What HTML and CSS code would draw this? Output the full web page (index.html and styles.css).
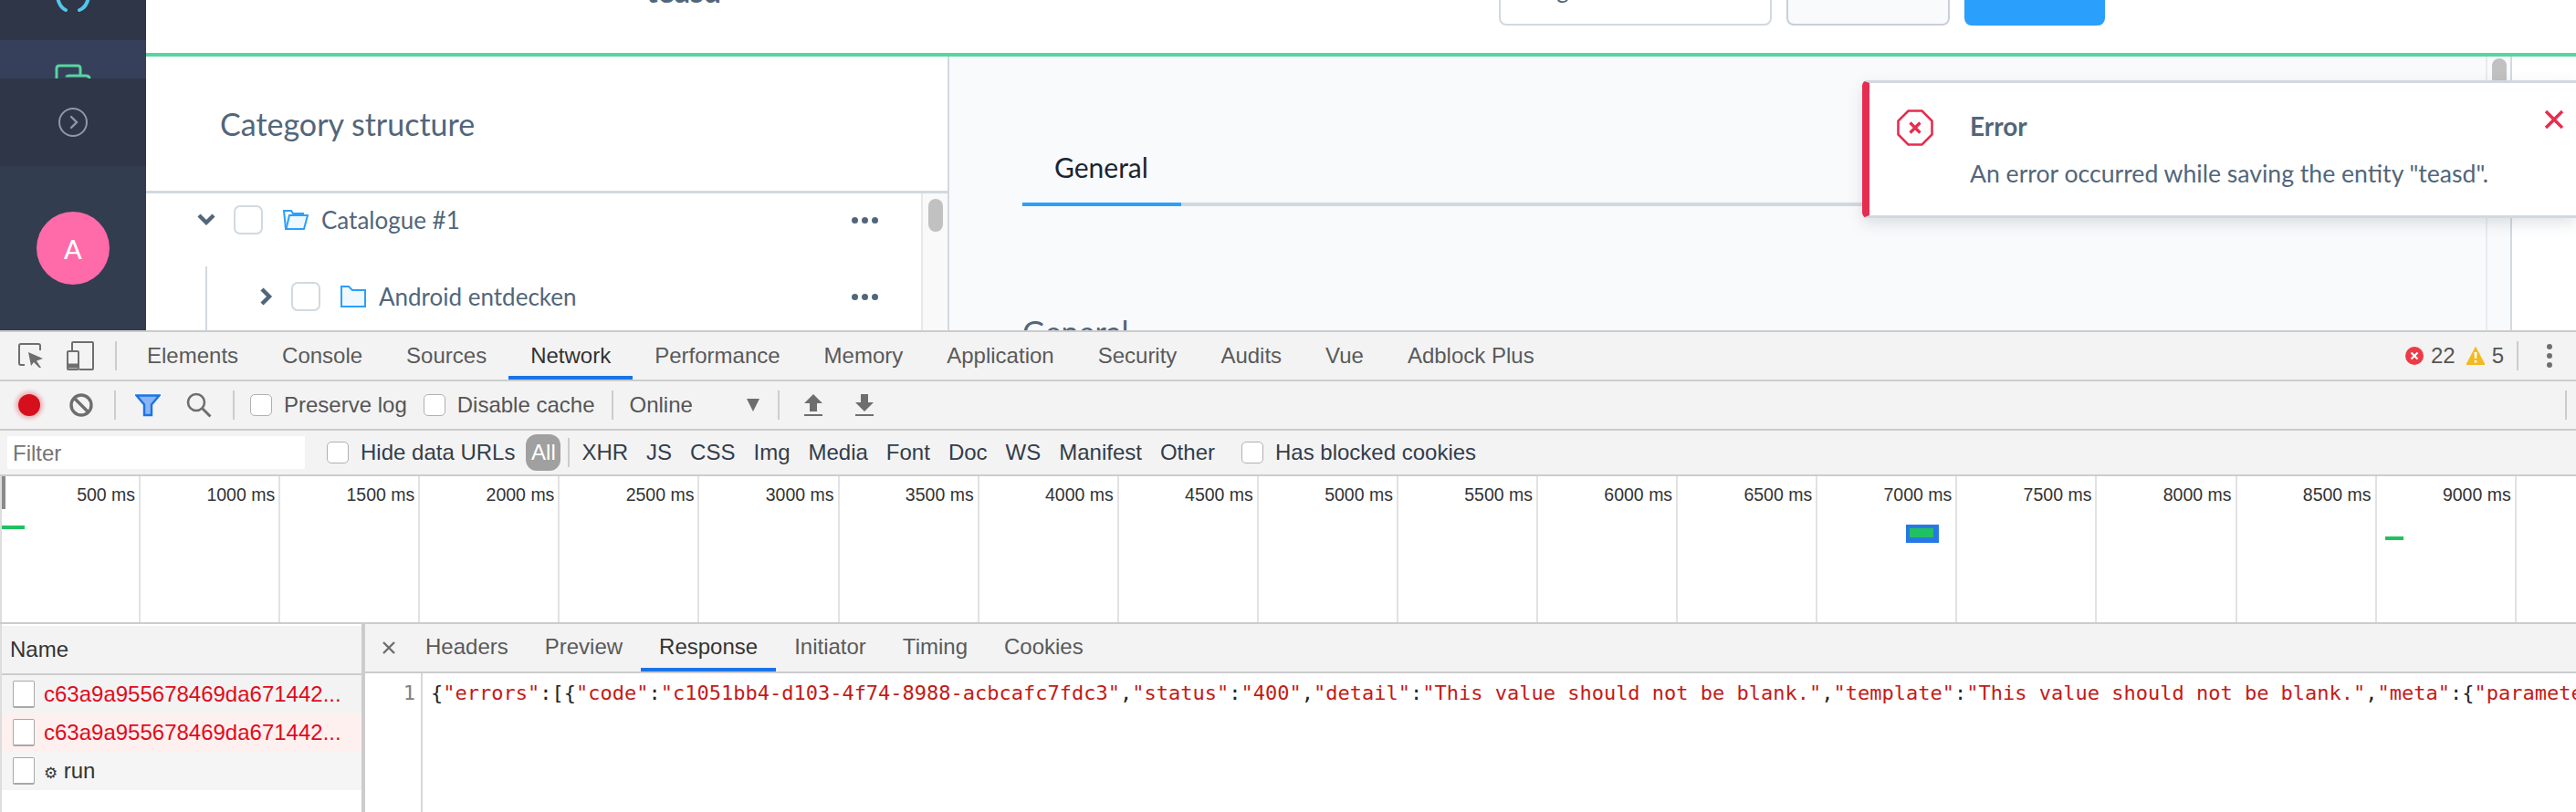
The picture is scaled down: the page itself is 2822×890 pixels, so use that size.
FILE: index.html
```html
<!DOCTYPE html>
<html lang="en">
<head>
  <meta charset="UTF-8" />
  <title>Category structure</title>
  <link rel="stylesheet" href="styles.css">
</head>
<body>
  <div class="app">
    <div class="sidebar">
      <div class="nav-item nav-cut">
        <svg width="40" height="16" viewBox="0 0 40 16" fill="none" stroke="#55c6ea" stroke-width="4" stroke-linecap="round"><path d="M3 -8C2 0 5 10 12 13"/><path d="M37 -8C38 0 35 10 27 13"/></svg>
      </div>
      <div class="nav-item nav-active">
        <svg width="40" height="16" viewBox="0 0 40 16" fill="none" stroke="#57d69f" stroke-width="3"><path d="M2 16V5Q2 2 5 2H25Q28 2 28 5V14"/><path d="M13 14.500Q13 13 16 13H34Q38 13 38 16"/></svg>
      </div>
      <div class="nav-toggle">
        <svg width="32" height="32" viewBox="0 0 32 32" fill="none" stroke="#8e9aa8" stroke-width="2"><circle cx="16" cy="16" r="15"/><path d="M14 10l6 6-6 6" stroke-width="2.400" stroke-linecap="round"/></svg>
      </div>
      <div class="nav-user"><span class="avatar">A</span></div>
    </div>
    <div class="workspace">
      <div class="topbar">
        <div class="entity-name">teasd</div>
        <div class="top-actions">
          <div class="btn btn-select">English</div>
          <div class="btn btn-plain"></div>
          <div class="btn btn-save"></div>
        </div>
      </div>
      <div class="panes">
        <div class="tree-pane">
          <h2 class="pane-title">Category structure</h2>
          <div class="tree-wrap">
            <div class="tree">
              <div class="tree-row">
                <svg class="chev" width="20" height="14" viewBox="0 0 20 14" fill="none" stroke="#52667a" stroke-width="4.400"><path d="M2 2l8 8 8-8"/></svg>
                <span class="box"></span>
                <svg class="folder" width="28" height="24" viewBox="0 0 28 24" fill="#eff8ff" stroke="#2b9ffc" stroke-width="2"><path d="M7 22H3L1 2H9L11 5H22V7"/><path d="M7 7H27L23 22H3.500Z"/></svg>
                <span class="tree-label">Catalogue #1</span>
                <span class="dots"><i></i><i></i><i></i></span>
              </div>
              <div class="tree-sub">
                <div class="tree-row">
                  <svg class="chev" width="14" height="20" viewBox="0 0 14 20" fill="none" stroke="#52667a" stroke-width="4.400"><path d="M2 2l8 8-8 8"/></svg>
                  <span class="box"></span>
                  <svg class="folder" width="28" height="24" viewBox="0 0 28 24" fill="#eff8ff" stroke="#2b9ffc" stroke-width="2"><path d="M1 1H9L13 5H27V23H1Z"/></svg>
                  <span class="tree-label">Android entdecken</span>
                  <span class="dots"><i></i><i></i><i></i></span>
                </div>
              </div>
            </div>
            <div class="scroll-track"><span class="scroll-thumb"></span></div>
          </div>
        </div>
        <div class="detail-pane">
          <div class="detail-tabs"><span class="detail-tab">General</span></div>
          <h2 class="detail-heading">General</h2>
        </div>
        <div class="main-scroll"><span class="main-thumb"></span></div>
        <div class="right-blank"></div>
      </div>
    </div>
    <div class="toast">
      <svg class="toast-icon" width="40" height="40" viewBox="0 0 40 40" fill="none" stroke="#e52d50" stroke-width="2.600"><path d="M12.500 1.500H27.500L38.500 12.500V27.500L27.500 38.500H12.500L1.500 27.500V12.500Z"/><path d="M14.500 14.500l11 11M25.500 14.500l-11 11" stroke-width="3.200"/></svg>
      <div class="toast-body">
        <div class="toast-title">Error</div>
        <div class="toast-msg">An error occurred while saving the entity "teasd".</div>
      </div>
      <svg class="toast-close" width="22" height="22" viewBox="0 0 22 22" fill="none" stroke="#e52d50" stroke-width="3.400"><path d="M2 2l18 18M20 2L2 20"/></svg>
    </div>
  </div>

  <div class="devtools">
    <div class="dt-bar dt-tabs">
      <svg class="ic-inspect" width="28" height="28" viewBox="0 0 28 28" fill="none" stroke="#6e6e6e" stroke-width="2"><path d="M7 24H3Q1 24 1 22V3Q1 1 3 1H22Q24 1 24 3V8"/><path d="M11 10L27 17L20 19.500L25 27L23 27L17 21L14 25Z" fill="#6e6e6e" stroke="none"/></svg>
      <svg class="ic-device" width="30" height="32" viewBox="0 0 30 32" fill="none" stroke="#6e6e6e" stroke-width="2"><path d="M6 10V2Q6 1 7 1H28Q29 1 29 2V30Q29 31 28 31H14"/><rect x="1" y="11" width="12" height="20" rx="1"/><path d="M1 27H13" stroke-width="5"/></svg>
      <span class="dt-sep sep-tabs"></span>
      <div class="tab-list">
        <span class="tab">Elements</span>
        <span class="tab">Console</span>
        <span class="tab">Sources</span>
        <span class="tab tab-on">Network</span>
        <span class="tab">Performance</span>
        <span class="tab">Memory</span>
        <span class="tab">Application</span>
        <span class="tab">Security</span>
        <span class="tab">Audits</span>
        <span class="tab">Vue</span>
        <span class="tab">Adblock Plus</span>
      </div>
      <div class="dt-counts">
        <svg width="20" height="20" viewBox="0 0 20 20"><circle cx="10" cy="10" r="10" fill="#ee3a46"/><path d="M6.500 6.500l7 7M13.500 6.500l-7 7" stroke="#fff" stroke-width="2.200"/></svg>
        <span class="count">22</span>
        <svg width="20" height="20" viewBox="0 0 20 20"><path d="M10 0.500L20 19.500H0Z" fill="#f3b922" stroke="#f3b922" stroke-linejoin="round"/><path d="M8.500 6H11.500L11 13H9Z M8.700 15H11.300V17.500H8.700Z" fill="#fff"/></svg>
        <span class="count">5</span>
        <span class="dt-sep sep-counts"></span>
        <span class="kebab"><i></i><i></i><i></i></span>
      </div>
    </div>

    <div class="dt-bar dt-tools">
      <span class="rec"></span>
      <svg class="ic-clear" width="26" height="26" viewBox="0 0 26 26" fill="none" stroke="#6e6e6e" stroke-width="3.400"><circle cx="13" cy="13" r="11"/><path d="M5.500 5.500l15 15"/></svg>
      <span class="dt-sep sep-a"></span>
      <svg class="ic-filter" width="28" height="25" viewBox="0 0 28 25" fill="#8bb4f2" stroke="#1a73e8" stroke-width="2.400"><path d="M1.500 1.500H26.500L18 11.500V23H10V11.500Z"/></svg>
      <svg class="ic-search" width="28" height="28" viewBox="0 0 28 28" fill="none" stroke="#6e6e6e" stroke-width="2.600"><circle cx="11" cy="11" r="9"/><path d="M17.500 17.500L26.500 26.500" stroke-width="3"/></svg>
      <span class="dt-sep sep-b"></span>
      <span class="check check-preserve"></span><span class="dt-label">Preserve log</span>
      <span class="check check-cache"></span><span class="dt-label">Disable cache</span>
      <span class="dt-sep sep-c"></span>
      <span class="dt-label lbl-online">Online</span>
      <span class="tri"></span>
      <span class="dt-sep sep-d"></span>
      <svg class="ic-up" width="20" height="24" viewBox="0 0 20 24" fill="#6e6e6e"><path d="M10 0L20 10H14V19H6V10H0Z"/><rect y="22" width="20" height="2"/></svg>
      <svg class="ic-down" width="20" height="24" viewBox="0 0 20 24" fill="#6e6e6e"><path d="M6 0H14V9H20L10 19L0 9H6Z"/><rect y="22" width="20" height="2"/></svg>
      <span class="dt-sep sep-e"></span>
    </div>

    <div class="dt-bar dt-filter">
      <div class="filter-box">Filter</div>
      <span class="check check-hide"></span><span class="ft ft-hide">Hide data URLs</span>
      <span class="pill">All</span>
      <span class="dt-sep sep-f"></span>
      <div class="ft-list">
        <span class="ft">XHR</span>
        <span class="ft">JS</span>
        <span class="ft">CSS</span>
        <span class="ft">Img</span>
        <span class="ft">Media</span>
        <span class="ft">Font</span>
        <span class="ft">Doc</span>
        <span class="ft">WS</span>
        <span class="ft">Manifest</span>
        <span class="ft">Other</span>
      </div>
      <span class="check check-blocked"></span><span class="ft">Has blocked cookies</span>
    </div>

    <div class="overview">
      <span class="ov-grip"></span>
      <div class="tick">500 ms</div>
      <div class="tick">1000 ms</div>
      <div class="tick">1500 ms</div>
      <div class="tick">2000 ms</div>
      <div class="tick">2500 ms</div>
      <div class="tick">3000 ms</div>
      <div class="tick">3500 ms</div>
      <div class="tick">4000 ms</div>
      <div class="tick">4500 ms</div>
      <div class="tick">5000 ms</div>
      <div class="tick">5500 ms</div>
      <div class="tick">6000 ms</div>
      <div class="tick">6500 ms</div>
      <div class="tick">7000 ms</div>
      <div class="tick">7500 ms</div>
      <div class="tick">8000 ms</div>
      <div class="tick">8500 ms</div>
      <div class="tick">9000 ms</div>
      <span class="ov-bar ov-first"></span>
      <span class="ov-bar ov-req"><i></i></span>
      <span class="ov-bar ov-last"></span>
    </div>

    <div class="net-split">
      <div class="names">
        <div class="names-head">Name</div>
        <div class="name-row"><span class="file"></span><span class="name-err">c63a9a955678469da671442...</span></div>
        <div class="name-row name-sel"><span class="file"></span><span class="name-err">c63a9a955678469da671442...</span></div>
        <div class="name-row name-alt"><span class="file"></span><span><span class="gear">⚙</span> run</span></div>
      </div>
      <div class="resp">
        <div class="resp-head">
          <svg class="resp-close" width="14" height="14" viewBox="0 0 14 14" stroke="#6e6e6e" stroke-width="2.400"><path d="M1 1l12 12M13 1L1 13"/></svg>
          <span class="rtab">Headers</span>
          <span class="rtab">Preview</span>
          <span class="rtab rtab-on">Response</span>
          <span class="rtab">Initiator</span>
          <span class="rtab">Timing</span>
          <span class="rtab">Cookies</span>
        </div>
        <div class="code">
          <div class="gutter">1</div>
          <div class="code-line">{<b>"errors"</b>:[{<b>"code"</b>:<b>"c1051bb4-d103-4f74-8988-acbcafc7fdc3"</b>,<b>"status"</b>:<b>"400"</b>,<b>"detail"</b>:<b>"This value should not be blank."</b>,<b>"template"</b>:<b>"This value should not be blank."</b>,<b>"meta"</b>:{<b>"parameters"</b>:{<b>"{{ value }}"</b>:<b>"null"</b>}}}]}</div>
        </div>
      </div>
    </div>
  </div>
</body>
</html>
```

FILE: styles.css
```css
* { box-sizing: border-box; }
html, body { margin: 0; padding: 0; height: 890px; overflow: hidden; background: #fff; }
body { font-family: "Liberation Sans", Arial, sans-serif; }
i { display: block; }

/* app */
.app { position: relative; display: flex; height: 362px; overflow: hidden; font-family: Lato, "Noto Sans", sans-serif; color: #52667a; }
.sidebar { width: 160px; flex: none; display: flex; flex-direction: column; background: #323d50; }
.nav-item { display: flex; justify-content: center; align-items: flex-end; overflow: hidden; background: #2e3648; }
.nav-cut { height: 44px; padding-bottom: 30px; }
.nav-active { height: 42px; background: #36405a; }
.nav-toggle { height: 96px; background: #2e3648; display: flex; justify-content: center; align-items: center; }
.nav-user { height: 180px; padding-top: 50px; display: flex; justify-content: center; align-items: flex-start; }
.avatar { width: 80px; height: 80px; border-radius: 50%; background: #ff6aa9; color: #fff; font-size: 29px; font-weight: 500; display: flex; align-items: center; justify-content: center; }

.workspace { flex: 1; min-width: 0; display: flex; flex-direction: column; }
.topbar { height: 62px; flex: none; border-bottom: 4px solid #57d69f; display: flex; justify-content: space-between; align-items: flex-end; overflow: hidden; padding: 0 516px 30px 548px; }
.entity-name { font-size: 34px; font-weight: 700; line-height: 40px; height: 40px; margin-bottom: 18px; color: #52667a; }
.top-actions { display: flex; gap: 16px; align-items: flex-end; height: 80px; }
.btn { height: 80px; border-radius: 8px; }
.btn-select { width: 299px; background: #fff; border: 2px solid #d1d9e0; font-size: 26px; color: #52667a; padding: 23px 0 0 32px; line-height: 30px; overflow: hidden; }
.btn-plain { width: 179px; background: #f9fafb; border: 2px solid #c8d0da; }
.btn-save { width: 154px; background: #2b9ffc; }

.panes { flex: 1; min-height: 0; display: flex; }
.tree-pane { width: 880px; flex: none; background: #fff; border-right: 2px solid #d1d9e0; display: flex; flex-direction: column; }
.pane-title { margin: 0; height: 150px; flex: none; padding: 0 0 0 81px; border-bottom: 3px solid #d1d9e0; font-size: 34px; font-weight: 400; line-height: 148px; color: #52667a; }
.tree-wrap { flex: 1; min-height: 0; display: flex; overflow: hidden; }
.tree { flex: 1; padding-top: 10px; }
.tree-row { display: flex; align-items: center; height: 38px; }
.tree > .tree-row { padding-left: 56px; }
.chev { flex: none; margin-right: 20px; }
.tree-sub { margin: 32px 0 0 65px; padding-left: 58px; border-left: 2px solid #d1d9e0; height: 120px; padding-top: 14px; }
.tree-sub .chev { margin-right: 20px; }
.box { width: 32px; height: 32px; flex: none; border: 2px solid #d1d9e0; border-radius: 7px; background: #fff; }
.folder { flex: none; margin-left: 22px; }
.tree-label { margin-left: 14px; font-size: 26px; line-height: 34px; color: #52667a; }
.dots { margin-left: auto; margin-right: 47px; display: flex; gap: 4px; }
.dots i { width: 7px; height: 7px; border-radius: 50%; background: #52667a; }
.scroll-track { width: 29px; flex: none; background: #f9f9f9; border-left: 2px solid #e8e8e8; padding: 6px 0 0 6px; }
.scroll-thumb { display: block; width: 16px; height: 36px; border-radius: 8px; background: #c1c1c1; }

.detail-pane { flex: 1; min-width: 0; background: #f9fafb; padding: 0 0 0 80px; }
.detail-tabs { height: 164px; border-bottom: 4px solid #d1d9e0; display: flex; align-items: flex-end; }
.detail-tab { display: block; width: 174px; height: 80px; margin-bottom: -4px; border-bottom: 4px solid #2b9ffc; padding: 16px 0 0 35px; line-height: 42px; font-size: 30px; color: #1a2533; }
.detail-heading { margin: 0; padding-top: 118px; font-size: 34px; line-height: 40px; font-weight: 400; color: #52667a; }
.main-scroll { width: 29px; flex: none; background: #f9fafb; border-left: 2px solid #e9ebee; border-right: 2px solid #d1d9e0; padding: 2px 0 0 5px; }
.main-thumb { display: block; width: 16px; height: 60px; border-radius: 8px; background: #c1c1c1; }
.right-blank { width: 70px; flex: none; background: #fff; }

.toast { position: absolute; left: 2040px; top: 88px; right: 0; height: 151px; display: flex; background: #fff; border-top: 3px solid #d1d9e0; border-bottom: 3px solid #d1d9e0; border-left: 8px solid #e52d50; border-radius: 6px 0 0 6px; box-shadow: 0 6px 16px rgba(82, 102, 122, 0.18); padding: 29px 0 0 30px; }
.toast-icon { flex: none; }
.toast-body { margin-left: 40px; margin-top: -1px; }
.toast-title { font-size: 28px; font-weight: 700; line-height: 38px; color: #52667a; }
.toast-msg { font-size: 26.600px; line-height: 38px; margin-top: 14px; color: #52667a; }
.toast-close { position: absolute; right: 13px; top: 29px; }

/* devtools */
.devtools { height: 528px; background: #fff; border-top: 2px solid #ccc; display: flex; flex-direction: column; font-size: 24px; color: #333; }
.dt-bar { flex: none; display: flex; align-items: center; background: #f3f3f3; border-bottom: 2px solid #ccc; }
.dt-sep { flex: none; width: 2px; height: 32px; background: #ccc; }
.dt-tabs { height: 54px; padding-left: 20px; }
.ic-inspect { flex: none; }
.ic-device { flex: none; margin-left: 25px; }
.sep-tabs { margin-left: 23px; }
.tab-list { display: flex; height: 52px; margin-left: 9px; }
.tab { padding: 0 24px; line-height: 52px; color: #5a5a5a; height: 52px; }
.tab-on { color: #333; border-bottom: 4px solid #1a73e8; }
.dt-counts { margin-left: auto; display: flex; align-items: center; height: 52px; padding-right: 26px; }
.count { color: #555; margin: 0 12px 0 8px; }
.sep-counts { margin-left: 2px; margin-right: 31px; }
.kebab { display: flex; flex-direction: column; gap: 4px; }
.kebab i { width: 6px; height: 6px; border-radius: 50%; background: #6e6e6e; }

.dt-tools { height: 54px; padding-left: 20px; }
.rec { width: 24px; height: 24px; flex: none; border-radius: 50%; background: #d60f1c; box-shadow: 0 0 4px 3px rgba(214, 15, 28, 0.28); }
.ic-clear { flex: none; margin-left: 32px; }
.sep-a { margin-left: 23px; }
.ic-filter { flex: none; margin-left: 21px; }
.ic-search { flex: none; margin-left: 28px; }
.sep-b { margin-left: 23px; }
.check { width: 24px; height: 24px; flex: none; background: #fff; border: 1px solid #b0b0b0; border-radius: 5px; }
.check-preserve { margin-left: 17px; }
.check-cache { margin-left: 18px; }
.dt-label { margin-left: 13px; color: #555; }
.sep-c { margin-left: 19px; }
.lbl-online { margin-left: 17px; }
.tri { width: 0; height: 0; margin-left: 59px; border-left: 7px solid transparent; border-right: 7px solid transparent; border-top: 14px solid #6e6e6e; }
.sep-d { margin-left: 20px; }
.ic-up { flex: none; margin-left: 27px; }
.ic-down { flex: none; margin-left: 36px; }
.sep-e { margin-left: auto; margin-right: 10px; }

.dt-filter { height: 50px; padding-left: 8px; color: #333d4a; }
.filter-box { width: 326px; height: 36px; background: #fff; color: #757575; padding-left: 6px; line-height: 38px; }
.check-hide { margin-left: 24px; }
.ft-hide, .check-blocked + .ft { margin-left: 13px; }
.pill { margin-left: 12px; width: 38px; height: 40px; border-radius: 12px; background: #a0a0a0; color: #fff; text-align: center; line-height: 40px; }
.sep-f { margin-left: 8px; }
.ft-list { display: flex; gap: 20px; margin-left: 13px; }
.check-blocked { margin-left: 29px; }

.overview { position: relative; height: 160px; flex: none; display: flex; background: #fff; border-left: 2px solid #ddd; overflow: hidden; }
.ov-grip { position: absolute; left: -2px; top: 0; width: 6px; height: 36px; background: #8a8a8a; }
.tick { flex: none; width: 153.100px; height: 160px; border-right: 2px solid #e2e2e2; text-align: right; padding: 8px 4px 0 0; font-size: 19.500px; line-height: 24px; color: #333; }
.tick:first-of-type { width: 152.100px; }
.ov-bar { position: absolute; }
.ov-first { left: 0; top: 54px; width: 25px; height: 4px; background: #20c160; }
.ov-req { left: 2086px; top: 53px; width: 36px; height: 20px; background: #2778e6; padding: 4px; }
.ov-req i { height: 10px; width: 26px; background: #20c160; }
.ov-last { left: 2611px; top: 66px; width: 20px; height: 4px; background: #20c160; }

.net-split { flex: 1; min-height: 0; display: flex; border-top: 2px solid #ccc; }
.names { width: 400px; flex: none; border-left: 2px solid #ddd; border-right: 4px solid #ccc; }
.names-head { height: 54px; margin-top: 2px; background: #f3f3f3; border-bottom: 2px solid #ccc; padding-left: 9px; line-height: 52px; }
.name-row { height: 42px; display: flex; align-items: center; background: #f3f3f3; padding-left: 12px; }
.name-sel { background: #fff0f0; }
.name-alt { background: #f5f5f5; }
.file { width: 24px; height: 30px; flex: none; margin-right: 10px; background: #fff; border: 1px solid #a8a8a8; border-bottom-width: 2px; border-radius: 2px; }
.name-err { color: #e00b1c; }
.gear { font-size: 17px; }

.resp { flex: 1; min-width: 0; display: flex; flex-direction: column; overflow: hidden; }
.resp-head { height: 54px; flex: none; background: #f3f3f3; border-bottom: 2px solid #ccc; display: flex; align-items: center; padding-left: 19px; }
.resp-close { flex: none; margin-right: 13px; }
.rtab { height: 52px; padding: 0 20px; line-height: 50px; color: #5a5a5a; }
.rtab-on { color: #333; border-bottom: 4px solid #1a73e8; }
.code { flex: 1; display: flex; font-family: "DejaVu Sans Mono", monospace; font-size: 22px; line-height: 44px; }
.gutter { width: 63px; flex: none; border-right: 2px solid #d8d8d8; text-align: right; padding-right: 6px; color: #808080; }
.code-line { padding-left: 9px; white-space: nowrap; color: #222; }
.code-line b { font-weight: 400; color: #c41a16; }
```
